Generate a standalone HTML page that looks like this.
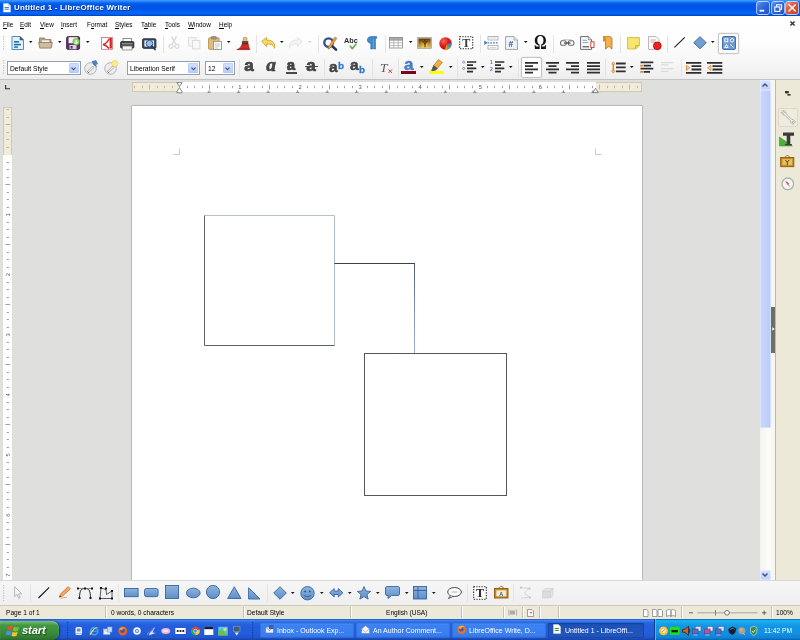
<!DOCTYPE html><html><head><meta charset="utf-8"><title>Untitled 1 - LibreOffice Writer</title><style>
*{margin:0;padding:0;box-sizing:border-box}
html,body{width:800px;height:640px;overflow:hidden;background:#dfdfdf;font-family:"Liberation Sans",sans-serif;}
.a{position:absolute}
svg{position:absolute;overflow:visible;will-change:transform}
.t{position:absolute;white-space:nowrap;line-height:1;will-change:transform}
#title{left:0;top:0;width:800px;height:15.5px;background:linear-gradient(to bottom,#4595fb 0%,#3590ff 6%,#1a7af8 12%,#0566f2 18%,#0259e6 26%,#0054e3 40%,#0055eb 56%,#005bf5 66%,#0266fb 78%,#0060ee 88%,#0053da 94%,#003fae 100%)}
#menus{left:0;top:15.5px;width:800px;height:64.5px;background:linear-gradient(to bottom,#ffffff 0%,#fdfdfd 40%,#f6f6f6 75%,#ededed 100%)}
#tbline{left:0;top:79px;width:800px;height:1px;background:#c4c4c4}
#doc{left:0;top:80px;width:800px;height:500px;background:#dfdfde;overflow:hidden}
#draw{left:0;top:580px;width:800px;height:25px;background:linear-gradient(to bottom,#f6f6f6,#efefef);border-top:1px solid #d8d8d8}
#status{left:0;top:604.5px;width:800px;height:14.5px;background:#ece9d8;border-top:1px solid #cfccbe}
#task{left:0;top:619px;width:800px;height:21px;background:linear-gradient(to bottom,#1f50c8 0%,#3f83f0 7%,#2a6be6 14%,#245edc 30%,#245ddb 70%,#2056cf 88%,#1941a5 100%)}
.mi{font-size:6.4px;color:#000;top:21.6px}
.mi u{text-decoration:none;border-bottom:0.6px solid #000}
.sep{position:absolute;width:1px;background:#e4e4e4}
.sb{font-size:6.6px;color:#000;top:610.3px}
.ssep{position:absolute;top:607px;height:11px;width:1px;background:#c5c2b2;border-right:1px solid #fff;box-sizing:content-box}
.tb{position:absolute;top:622.5px;height:15.5px;border-radius:2px;background:linear-gradient(to bottom,#5e9cf7 0%,#3c81f3 12%,#3a7ef0 80%,#3170de 100%);box-shadow:inset 0 0 0 0.5px #2b62c9}
.tb.act{background:linear-gradient(to bottom,#17429f 0%,#1e52b7 15%,#1f55bd 100%);box-shadow:inset 0 0 0 0.5px #123a90}
.tbt{font-size:7px;color:#fff;top:627.4px}
.combo{position:absolute;background:#fff;border:1px solid #939eae}
.cbtn{position:absolute;top:1px;right:1px;bottom:1px;width:10px;border-radius:1.5px;background:linear-gradient(to bottom,#d4e0fd,#b9cbf8);box-shadow:inset 0 0 0 0.5px #b0c4f3}
.ct{font-size:6.7px;color:#000}
</style></head><body>
<div class="a" id="title"></div>
<svg style="left:2.5px;top:3.2px" width="7.9" height="9.5" viewBox="0 0 10 12"><path d="M0.5 0.5h6l3 3v8h-9z" fill="#fff" stroke="#cfe0f8" stroke-width=".6"/><path d="M6.5 .5v3h3" fill="#dbe8f8" stroke="#9bb" stroke-width=".5"/><rect x="2" y="5" width="5.5" height="1.2" fill="#3b6fb5"/><rect x="2" y="7.2" width="5.5" height="1.2" fill="#3b6fb5"/></svg>
<div class="t " style="left:14px;top:4px;font-size:7.9px;font-weight:bold;color:#fff;text-shadow:0.5px 0.5px 0 #0a2a7a;letter-spacing:0.23px">Untitled 1 - LibreOffice Writer</div>
<div class="a" style="left:757.3px;top:1.900px;width:12.200px;height:11.800px;border-radius:2px;background:linear-gradient(135deg,#7aa6f5 0%,#3f78e6 25%,#2a5fd6 60%,#2454c8 100%);box-shadow:0 0 0 0.7px #e8efff"></div>
<div class="a" style="left:771.6px;top:1.900px;width:12.200px;height:11.800px;border-radius:2px;background:linear-gradient(135deg,#7aa6f5 0%,#3f78e6 25%,#2a5fd6 60%,#2454c8 100%);box-shadow:0 0 0 0.7px #e8efff"></div>
<div class="a" style="left:786px;top:1.900px;width:12.200px;height:11.800px;border-radius:2px;background:linear-gradient(135deg,#eeb09c 0%,#e0684c 28%,#d4502f 65%,#c4421e 100%);box-shadow:0 0 0 0.7px #e8efff"></div>
<svg style="left:757.3px;top:1.9px" width="12.5" height="12" viewBox="0 0 12.5 12"><rect x="2.6" y="7.800" width="4.600" height="1.800" fill="#fff"/></svg>
<svg style="left:771.6px;top:1.9px" width="12.5" height="12" viewBox="0 0 12.5 12"><rect x="4.6" y="2.8" width="5" height="4.4" fill="none" stroke="#fff" stroke-width="1.1"/><rect x="2.8" y="5" width="5" height="4.4" fill="#2f66da" stroke="#fff" stroke-width="1.1"/></svg>
<svg style="left:786px;top:1.9px" width="12.5" height="12" viewBox="0 0 12.5 12"><path d="M3 2.700l6.300 6.300M9.300 2.700l-6.300 6.300" stroke="#fff" stroke-width="1.400" stroke-linecap="round"/></svg>
<div class="a" id="menus"></div><div class="a" id="tbline"></div>
<div class="t mi" style="left:3.3px;"><u>F</u>ile</div>
<div class="t mi" style="left:20.3px;"><u>E</u>dit</div>
<div class="t mi" style="left:39.8px;"><u>V</u>iew</div>
<div class="t mi" style="left:61px;"><u>I</u>nsert</div>
<div class="t mi" style="left:87px;">F<u>o</u>rmat</div>
<div class="t mi" style="left:115.3px;"><u>S</u>tyles</div>
<div class="t mi" style="left:140.8px;">T<u>a</u>ble</div>
<div class="t mi" style="left:164.8px;"><u>T</u>ools</div>
<div class="t mi" style="left:188px;"><u>W</u>indow</div>
<div class="t mi" style="left:219px;"><u>H</u>elp</div>
<svg style="left:789.5px;top:21px" width="5" height="5" viewBox="0 0 5 5"><path d="M.4 .4l4.2 4.2M4.6 .4L.4 4.6" stroke="#2e2e2e" stroke-width="1.350"/></svg>
<svg style="left:2.5px;top:36px" width="2" height="15" viewBox="0 0 2 15"><rect x="0" y="0" width="1.2" height="1.2" fill="#c4c4c4"/><rect x="0" y="2.5" width="1.2" height="1.2" fill="#c4c4c4"/><rect x="0" y="5.0" width="1.2" height="1.2" fill="#c4c4c4"/><rect x="0" y="7.5" width="1.2" height="1.2" fill="#c4c4c4"/><rect x="0" y="10.0" width="1.2" height="1.2" fill="#c4c4c4"/><rect x="0" y="12.5" width="1.2" height="1.2" fill="#c4c4c4"/></svg>
<svg style="left:2.5px;top:60px" width="2" height="16" viewBox="0 0 2 16"><rect x="0" y="0" width="1.2" height="1.2" fill="#c4c4c4"/><rect x="0" y="2.5" width="1.2" height="1.2" fill="#c4c4c4"/><rect x="0" y="5.0" width="1.2" height="1.2" fill="#c4c4c4"/><rect x="0" y="7.5" width="1.2" height="1.2" fill="#c4c4c4"/><rect x="0" y="10.0" width="1.2" height="1.2" fill="#c4c4c4"/><rect x="0" y="12.5" width="1.2" height="1.2" fill="#c4c4c4"/></svg>
<svg style="left:10.5px;top:35.5px" width="13" height="14" viewBox="0 0 13 14"><path d="M1 .5h8l3.5 3.5v9.5h-11.5z" fill="#e4f1f8" stroke="#4f8fbf" stroke-width="1"/><path d="M9 .5v3.5h3.5z" fill="#3a4a5a" stroke="#4a6a8a" stroke-width=".6"/><rect x="3" y="5" width="5" height="1.6" fill="#1c6fb0"/><rect x="3" y="7.8" width="7" height="1.6" fill="#1c6fb0"/><rect x="3" y="10.4" width="4" height="1.4" fill="#1c6fb0"/></svg>
<svg style="left:28.7px;top:41.1px" width="3.6" height="2.1" viewBox="0 0 3.6 2.1"><path d="M0 0h3.600l-1.800 2.100z" fill="#111"/></svg>
<svg style="left:38px;top:37px" width="15" height="11.5" viewBox="0 0 15 11.5"><path d="M1.5 1h5l1 1.5h5.5v3h-11.5z" fill="#b9a384" stroke="#8a7558" stroke-width=".8"/><rect x="3.5" y="3" width="8" height="4" fill="#f3efe6" stroke="#a89b86" stroke-width=".5"/><path d="M.6 5.5h13.8l-1.2 5.6h-11.4z" fill="#cdbb9f" stroke="#8a7558" stroke-width=".8"/></svg>
<svg style="left:57.7px;top:41.1px" width="3.6" height="2.1" viewBox="0 0 3.6 2.1"><path d="M0 0h3.600l-1.800 2.100z" fill="#111"/></svg>
<svg style="left:65.8px;top:35.5px" width="14.4" height="14" viewBox="0 0 14.4 14"><rect x=".6" y=".6" width="13" height="12.8" rx="1.5" fill="#5c3566" stroke="#3d2246" stroke-width=".9"/><rect x="2.6" y="1.2" width="9" height="6" fill="#f4f4f4"/><rect x="3.5" y="9" width="7" height="4.2" fill="#d8d0dc"/><rect x="4.6" y="10" width="2" height="2.6" fill="#5c3566"/><circle cx="10.2" cy="5.800" r="3.300" fill="#9ad86a" stroke="#5aa62a" stroke-width=".7"/><path d="M10.2 3.900v3.800M8.500 6.200l1.700 1.700 1.700-1.700" stroke="#fff" stroke-width="1" fill="none"/></svg>
<svg style="left:85.7px;top:41.1px" width="3.6" height="2.1" viewBox="0 0 3.6 2.1"><path d="M0 0h3.600l-1.800 2.100z" fill="#111"/></svg>
<svg style="left:100.5px;top:36.8px" width="12" height="12.8" viewBox="0 0 12 12.8"><rect x=".5" y=".5" width="11" height="11.800" fill="#fff" stroke="#d06a6a" stroke-width=".8"/><path d="M9.200 1v10.500M10.300 1v10.500" stroke="#d21f1f" stroke-width="1.100"/><path d="M8.500 1.500c-1.500 3-4 5.500-6.500 6 2 .5 4.500 2 6 4" fill="none" stroke="#d21f1f" stroke-width="1.400"/></svg>
<svg style="left:120.3px;top:37.5px" width="14.2" height="12" viewBox="0 0 14.2 12"><rect x="3" y=".5" width="8.500" height="4" fill="#fff" stroke="#777" stroke-width=".8"/><rect x=".6" y="3.6" width="13.300" height="6.500" rx="1" fill="#4a4a4a" stroke="#222" stroke-width=".8"/><rect x="2.500" y="8" width="9.500" height="4" fill="#f4f4f4" stroke="#777" stroke-width=".7"/><rect x="2" y="5" width="10.500" height="1.3" fill="#8a8a8a"/></svg>
<svg style="left:141.5px;top:37.5px" width="13.8" height="12" viewBox="0 0 13.8 12"><rect x=".6" y=".8" width="13.300" height="9.500" rx="1" fill="#3f4a57" stroke="#1f2630" stroke-width=".9"/><rect x="2.400" y="2.400" width="9.700" height="6.200" fill="#e9eef4"/><circle cx="7.5" cy="5.6" r="3.3" fill="#9fc0e6" stroke="#2d5f9a" stroke-width="1"/><path d="M9.8 8l3.200 3.500" stroke="#2d3e55" stroke-width="1.800" stroke-linecap="round"/></svg>
<div class="sep" style="left:163px;top:35px;height:18px"></div>
<svg style="left:168px;top:36px" width="12" height="13" viewBox="0 0 12 13"><path d="M3.500 .5l4.500 8M8.500 .5l-4.500 8" stroke="#d6d6d6" stroke-width="1.300"/><circle cx="3" cy="10.300" r="2" fill="none" stroke="#d9d9d9" stroke-width="1.200"/><circle cx="9" cy="10.300" r="2" fill="none" stroke="#d9d9d9" stroke-width="1.200"/></svg>
<svg style="left:188px;top:36.5px" width="12.5" height="12.5" viewBox="0 0 12.5 12.5"><rect x=".6" y=".6" width="7.500" height="8.500" fill="#f6f6f6" stroke="#dcdcdc" stroke-width=".9"/><rect x="4.400" y="3.400" width="7.500" height="8.500" fill="#f8f8f8" stroke="#d6d6d6" stroke-width=".9"/></svg>
<svg style="left:208px;top:35.5px" width="14" height="14" viewBox="0 0 14 14"><rect x=".6" y="1.800" width="10.500" height="11.500" rx="1" fill="#e0bd78" stroke="#a8843a" stroke-width=".8"/><rect x="3.300" y=".5" width="5" height="2.600" rx=".8" fill="#9a9a9a" stroke="#666" stroke-width=".6"/><rect x="5.500" y="5.500" width="8" height="8" fill="#fff" stroke="#8a8a8a" stroke-width=".8"/><path d="M7 8h5M7 10h5M7 12h3" stroke="#aaa" stroke-width=".7"/></svg>
<svg style="left:226.7px;top:41.1px" width="3.6" height="2.1" viewBox="0 0 3.6 2.1"><path d="M0 0h3.600l-1.800 2.100z" fill="#111"/></svg>
<svg style="left:236px;top:36.5px" width="14.5" height="13.5" viewBox="0 0 14.5 13.5"><rect x="7.300" y=".4" width="3.600" height="4.600" rx=".8" fill="#e8c07a" stroke="#a8782c" stroke-width=".6"/><rect x="6.200" y="4.600" width="5.800" height="2.400" fill="#5a4a3a" stroke="#3a2a1a" stroke-width=".5"/><path d="M6 7h6.200c.3 2 .8 3.800 1.600 5.600h-13c3-1 4.800-3 5.200-5.600z" fill="#d42a2a" stroke="#8f1313" stroke-width=".6"/><path d="M2.500 12.500c2.500-.5 6-.8 10.500-.3" stroke="#8f1313" stroke-width=".6" fill="none"/></svg>
<div class="sep" style="left:255.5px;top:35px;height:18px"></div>
<svg style="left:261px;top:37px" width="14.5" height="11.5" viewBox="0 0 14.5 11.5"><path d="M.7 4.300L5.600 .6v2.500c4.800-.3 8.200 2.300 8.200 6.200 0 .8-.2 1.500-.4 2-0.400-2.800-2.800-4.600-7.800-4.300v2.600z" fill="#f6d968" stroke="#c9a52a" stroke-width=".9" stroke-linejoin="round"/></svg>
<svg style="left:280.2px;top:41.1px" width="3.6" height="2.1" viewBox="0 0 3.6 2.1"><path d="M0 0h3.600l-1.800 2.100z" fill="#111"/></svg>
<svg style="left:289px;top:37px" width="14" height="11.5" viewBox="0 0 14 11.5"><path d="M13.300 4.300L8.400 .6v2.500C3.600 2.800 .2 5.400 .2 9.300c0 .8.200 1.500.4 2 .4-2.800 2.800-4.600 7.800-4.300v2.600z" fill="#f3f3f3" stroke="#e3e3e3" stroke-width=".9" stroke-linejoin="round"/></svg>
<svg style="left:308.2px;top:41.1px" width="3.6" height="2.1" viewBox="0 0 3.6 2.1"><path d="M0 0h3.600l-1.800 2.100z" fill="#cfcfcf"/></svg>
<div class="sep" style="left:317.5px;top:35px;height:18px"></div>
<svg style="left:323px;top:36.5px" width="15" height="13.5" viewBox="0 0 15 13.5"><circle cx="5.600" cy="5.600" r="4.300" fill="#fff" fill-opacity=".5" stroke="#2f4f8f" stroke-width="2.300"/><path d="M8.800 8.800l4.200 3.800" stroke="#22345f" stroke-width="2.600" stroke-linecap="round"/><path d="M13.800 1.200l-6.500 9.800-2.300 1.200.5-2.500 6.300-9.500z" fill="#f0a040" stroke="#a8621c" stroke-width=".6"/></svg>
<svg style="left:343.7px;top:36.5px" width="15" height="13" viewBox="0 0 15 13"><text x="0" y="5.900" font-family="Liberation Sans,sans-serif" font-weight="bold" font-size="7.200" fill="#2a2a3a" textLength="13.800" lengthAdjust="spacingAndGlyphs">Abc</text><path d="M6.300 9.200l2 2.400 3.600-4.400" fill="none" stroke="#6ab04a" stroke-width="1.700" stroke-linecap="round" stroke-linejoin="round"/></svg>
<svg style="left:366.5px;top:36px" width="10" height="13.5" viewBox="0 0 10 13.5"><path d="M4.600 .6h5v1.800h-1.200v10.600h-1.700v-10.600h-1.200v10.600h-1.700v-5.800c-2 0-3.400-1.400-3.400-3.300s1.600-3.300 4.200-3.300z" fill="#3f8fd6" stroke="#1f5f9f" stroke-width=".6"/></svg>
<div class="sep" style="left:384.5px;top:35px;height:18px"></div>
<svg style="left:389px;top:37px" width="14" height="11.5" viewBox="0 0 14 11.5"><rect x=".5" y=".5" width="13" height="10.500" fill="#fff" stroke="#8a8a8a" stroke-width=".8"/><rect x=".5" y=".5" width="13" height="2.600" fill="#b0b0b0" stroke="#8a8a8a" stroke-width=".8"/><path d="M.5 5.800h13M.5 8.400h13M4.800 .5v10.500M9.200 .5v10.500" stroke="#a0a0a0" stroke-width=".7"/></svg>
<svg style="left:408.7px;top:41.1px" width="3.6" height="2.1" viewBox="0 0 3.6 2.1"><path d="M0 0h3.600l-1.800 2.100z" fill="#111"/></svg>
<svg style="left:417.3px;top:37px" width="15" height="11.8" viewBox="0 0 15 11.8"><defs><radialGradient id="ig" cx=".55" cy="1" r=".9"><stop offset="0" stop-color="#ffe070"/><stop offset=".45" stop-color="#d8a030"/><stop offset="1" stop-color="#6a4414"/></radialGradient></defs><rect x=".4" y=".4" width="14.200" height="11" fill="#cfc6b0" stroke="#a89f88" stroke-width=".7"/><rect x="1.500" y="1.500" width="12" height="8.800" fill="url(#ig)"/><path d="M8 10.300v-4M8 6.800l-2.300-2.800M8 6.800l2.300-2.800M8 5v-2.500" stroke="#2a1a06" stroke-width=".9"/></svg>
<svg style="left:439.3px;top:37px" width="13.2" height="13" viewBox="0 0 13.2 13"><defs><radialGradient id="cg" cx=".35" cy=".3" r=".8"><stop offset="0" stop-color="#f46a5a"/><stop offset=".5" stop-color="#e01b1b"/><stop offset="1" stop-color="#b01010"/></radialGradient></defs><circle cx="6.500" cy="6.500" r="6.200" fill="url(#cg)"/><path d="M7.500 7.500l5-1.800a6.200 6.200 0 0 1-1 4.800z" fill="#4a82d0"/><path d="M7.500 7.500l4 3a6.200 6.200 0 0 1-3 2z" fill="#6ab04a"/><path d="M7.500 7.500l1 5a6.200 6.200 0 0 1-2.500.1z" fill="#e8a030"/></svg>
<svg style="left:459px;top:36px" width="14.5" height="13.5" viewBox="0 0 14.5 13.5"><rect x=".7" y=".7" width="13" height="12" fill="#fff" stroke="#222" stroke-width="1.100" stroke-dasharray="1.300 1.300"/><text x="7.250" y="11" text-anchor="middle" font-family="Liberation Serif,serif" font-weight="bold" font-size="12" fill="#3a3a3a">T</text></svg>
<div class="sep" style="left:479.5px;top:35px;height:18px"></div>
<svg style="left:484px;top:36px" width="15" height="13.5" viewBox="0 0 15 13.5"><rect x="4" y=".4" width="10" height="3.600" fill="#fff" stroke="#9a9a9a" stroke-width=".7"/><rect x="4" y="9.500" width="10" height="3.600" fill="#fff" stroke="#9a9a9a" stroke-width=".7"/><path d="M3.500 6.800h11" stroke="#4a7fc0" stroke-width="1.300" stroke-dasharray="1.800 1"/><path d="M.3 4.600l3.200 2.200-3.200 2.200z" fill="#3f78c0"/><path d="M5.500 2h7M5.500 11.500h7" stroke="#c2c2c2" stroke-width=".7"/></svg>
<svg style="left:505px;top:35.5px" width="13" height="14" viewBox="0 0 13 14"><path d="M.6 .6h8.400l3.400 3.400v9.400h-11.800z" fill="#eef4fa" stroke="#9a9a9a" stroke-width=".9"/><path d="M9 .6v3.400h3.400" fill="#e4e4e4" stroke="#9a9a9a" stroke-width=".7"/><text x="5.800" y="11.200" text-anchor="middle" font-family="Liberation Sans,sans-serif" font-weight="bold" font-size="8.500" fill="#2a5090">#</text></svg>
<svg style="left:524.2px;top:41.1px" width="3.6" height="2.1" viewBox="0 0 3.6 2.1"><path d="M0 0h3.600l-1.800 2.100z" fill="#111"/></svg>
<svg style="left:533px;top:36px" width="15" height="14" viewBox="0 0 15 14"><text x="7.250" y="13.300" text-anchor="middle" font-family="Liberation Serif,serif" font-weight="bold" font-size="18.500" fill="#161616" transform="translate(7.250 0) scale(.86 1.180) translate(-7.250 -2)">Ω</text></svg>
<div class="sep" style="left:553px;top:35px;height:18px"></div>
<svg style="left:559.5px;top:38.5px" width="14.5" height="8" viewBox="0 0 14.5 8"><rect x=".6" y="1.800" width="5.600" height="4.400" rx="1.500" fill="none" stroke="#6a6a6a" stroke-width="1.100"/><rect x="8.300" y="1.800" width="5.600" height="4.400" rx="1.500" fill="none" stroke="#6a6a6a" stroke-width="1.100"/><path d="M4 4h6.500" stroke="#4a4a4a" stroke-width="1.300"/><path d="M3 .8h8.500" stroke="#999" stroke-width=".6"/></svg>
<svg style="left:580px;top:35.8px" width="14.5" height="14" viewBox="0 0 14.5 14"><path d="M.6 .6h7.800l3.200 3.200v9.600h-11z" fill="#fafcfe" stroke="#5a5a5a" stroke-width=".9"/><path d="M8.400 .6v3.200h3.200" fill="#e0e6ec" stroke="#5a5a5a" stroke-width=".6"/><path d="M2.500 4.300h4.500M2.500 6.600h6" stroke="#7a9ab8" stroke-width=".9"/><path d="M2.500 10.800h6.500" stroke="#333" stroke-width="1"/><rect x="10.800" y="5.800" width="3.200" height="5.600" fill="#fff" stroke="#c03a2a" stroke-width=".9"/></svg>
<svg style="left:602px;top:36px" width="11" height="13.5" viewBox="0 0 11 13.5"><path d="M1 .6h6.500c1.500 0 2.500 1 2.500 2.500v10l-3.300-2.800-3.200 2.800v-10.500c0-1-1-2-2.500-2z" fill="#f3b04a" stroke="#b5761a" stroke-width=".8"/><path d="M1 .6c1.500 0 2.500 1 2.500 2v3h-2.500z" fill="#d88f2a"/></svg>
<div class="sep" style="left:619.5px;top:35px;height:18px"></div>
<svg style="left:627px;top:36.5px" width="13" height="12.5" viewBox="0 0 13 12.5"><path d="M.6 .6h11.800v8l-3.800 3.400h-8z" fill="#f6e670" stroke="#cdb42a" stroke-width=".8"/><path d="M12.400 8.600h-3.800v3.400" fill="#e6d450" stroke="#c4a000" stroke-width=".6"/></svg>
<svg style="left:647.5px;top:35.5px" width="14" height="14" viewBox="0 0 14 14"><path d="M.6 .6h7.400l3 3v9.800h-10.400z" fill="#fff" stroke="#aaa" stroke-width=".9"/><path d="M2.400 4h5.500M2.400 6h5.500" stroke="#c88" stroke-width=".8"/><circle cx="9.300" cy="9.800" r="3.900" fill="#e22" stroke="#a00" stroke-width=".7"/></svg>
<div class="sep" style="left:667px;top:35px;height:18px"></div>
<svg style="left:674px;top:37px" width="11" height="10.8" viewBox="0 0 11 10.8"><path d="M.4 10.400L10.800 .4" stroke="#222" stroke-width="1.100"/></svg>
<svg style="left:692.5px;top:36px" width="14" height="13.5" viewBox="0 0 14 13.5"><path d="M7 .7l6.300 6-6.300 6-6.300-6z" fill="#729fcf" stroke="#3465a4" stroke-width=".9"/></svg>
<svg style="left:711.2px;top:41.1px" width="3.6" height="2.1" viewBox="0 0 3.6 2.1"><path d="M0 0h3.600l-1.800 2.100z" fill="#111"/></svg>
<div class="a" style="left:718px;top:32.500px;width:21px;height:21.500px;border:1px solid #c9c9c9;border-radius:2px;background:#fdfdfd;box-shadow:0 0 0 .5px #e6e6e6"></div>
<svg style="left:721.5px;top:36px" width="14" height="14" viewBox="0 0 14 14"><rect x=".5" y=".5" width="13" height="13" rx="1.500" fill="#6f9bd1" stroke="#3465a4" stroke-width=".9"/><rect x="2.800" y="2.800" width="3" height="3" fill="none" stroke="#fff" stroke-width=".9"/><circle cx="10" cy="4.300" r="1.700" fill="none" stroke="#fff" stroke-width=".9"/><path d="M2.600 11.400l1.800-3 1.800 3z" fill="none" stroke="#fff" stroke-width=".9"/><path d="M8.300 8.500l3.300 3" stroke="#fff" stroke-width=".9"/></svg>
<div class="combo" style="left:7px;top:61px;width:73.5px;height:13.5px"><div class="t ct" style="left:2.000px;top:3.500px">Default Style</div><div class="cbtn"><svg style="left:2.500px;top:3.700px" width="5" height="3.500" viewBox="0 0 5 3.500"><path d="M.5 .6l2 2 2-2" fill="none" stroke="#3a559c" stroke-width="1.200"/></svg></div></div>
<div class="combo" style="left:127px;top:61px;width:73px;height:13.5px"><div class="t ct" style="left:2.000px;top:3.500px">Liberation Serif</div><div class="cbtn"><svg style="left:2.500px;top:3.700px" width="5" height="3.500" viewBox="0 0 5 3.500"><path d="M.5 .6l2 2 2-2" fill="none" stroke="#3a559c" stroke-width="1.200"/></svg></div></div>
<div class="combo" style="left:204.5px;top:61px;width:30px;height:13.5px"><div class="t ct" style="left:2.000px;top:3.500px">12</div><div class="cbtn"><svg style="left:2.500px;top:3.700px" width="5" height="3.500" viewBox="0 0 5 3.500"><path d="M.5 .6l2 2 2-2" fill="none" stroke="#3a559c" stroke-width="1.200"/></svg></div></div>
<svg style="left:84px;top:59.5px" width="14" height="15" viewBox="0 0 14 15"><circle cx="6.500" cy="8.500" r="5.800" fill="#ececec" stroke="#a4a4a4" stroke-width=".8"/><path d="M3.500 11.500l5-5.500 1.500 1.500-5.500 5z" fill="#fff" stroke="#8a8a8a" stroke-width=".6"/><path d="M3.500 11.500l1.500 1.500" stroke="#555" stroke-width=".8"/><path d="M8 1.500l4-1 1.500 3.500-2 .5 1 2-2.500-1.500z" fill="#4a86cf" stroke="#2a5a9f" stroke-width=".5"/></svg>
<svg style="left:104px;top:59.5px" width="14" height="15" viewBox="0 0 14 15"><circle cx="6.500" cy="8.500" r="5.800" fill="#ececec" stroke="#a4a4a4" stroke-width=".8"/><path d="M3.500 11.500l5-5.500 1.500 1.500-5.500 5z" fill="#fff" stroke="#8a8a8a" stroke-width=".6"/><path d="M3.500 11.500l1.500 1.500" stroke="#555" stroke-width=".8"/><circle cx="10.800" cy="3.600" r="3" fill="#f8ee90" stroke="#d8c84a" stroke-width=".5"/></svg>
<div class="sep" style="left:238.5px;top:59px;height:18px"></div>
<div class="t" style="left:243.4px;top:56.800px;width:12px;text-align:center;font-size:17px;font-weight:bold;color:#474747;-webkit-text-stroke:.7px #3a3a3a;">a</div>
<div class="t" style="left:264.6px;top:56.800px;width:12px;text-align:center;font-size:17px;font-weight:bold;color:#474747;-webkit-text-stroke:.7px #3a3a3a;font-style:italic;font-family:'Liberation Serif',serif;font-size:19.500px;top:54.700px;-webkit-text-stroke:.5px #3a3a3a">a</div>
<div class="t" style="left:285px;top:56.800px;width:12px;text-align:center;font-size:17px;font-weight:bold;color:#474747;-webkit-text-stroke:.7px #3a3a3a;font-size:15px;top:57.300px">a</div>
<div class="a" style="left:285.500px;top:72.400px;width:11px;height:1.300px;background:#4a4a4a"></div>
<div class="t" style="left:305px;top:56.800px;width:12px;text-align:center;font-size:17px;font-weight:bold;color:#474747;-webkit-text-stroke:.7px #3a3a3a;">a</div>
<div class="a" style="left:304.500px;top:66px;width:13.500px;height:1.300px;background:#4a4a4a"></div>
<div class="sep" style="left:324px;top:59px;height:18px"></div>
<div class="t" style="left:329.300px;top:58.800px;font-size:15.500px;font-weight:bold;color:#474747;-webkit-text-stroke:.5px #3a3a3a">a</div><div class="t" style="left:338.300px;top:60.600px;font-size:9.800px;font-weight:bold;color:#2f7acb;-webkit-text-stroke:.3px #2f7acb">b</div>
<div class="t" style="left:350.300px;top:57.400px;font-size:15.500px;font-weight:bold;color:#474747;-webkit-text-stroke:.5px #3a3a3a">a</div><div class="t" style="left:359.300px;top:65.300px;font-size:9.800px;font-weight:bold;color:#2f7acb;-webkit-text-stroke:.3px #2f7acb">b</div>
<div class="sep" style="left:371.5px;top:59px;height:18px"></div>
<div class="t" style="left:379.500px;top:60.500px;font-family:'Liberation Serif',serif;font-style:italic;font-size:13.500px;color:#5e5e5e">T</div>
<svg style="left:387.5px;top:69.3px" width="4.4" height="4.4" viewBox="0 0 4.4 4.4"><path d="M.4 .4l3.600 3.600M4 .4l-3.600 3.600" stroke="#d84040" stroke-width="1"/></svg>
<div class="sep" style="left:398px;top:59px;height:18px"></div>
<div class="t" style="left:404px;top:55.500px;font-size:17px;font-weight:bold;color:#4682c8;-webkit-text-stroke:.4px #3a6fb0">a</div>
<div class="a" style="left:401.300px;top:70.700px;width:14.700px;height:3.500px;background:#7e0021"></div>
<svg style="left:420.2px;top:66.1px" width="3.6" height="2.1" viewBox="0 0 3.6 2.1"><path d="M0 0h3.600l-1.800 2.100z" fill="#111"/></svg>
<svg style="left:430px;top:59px" width="13" height="12" viewBox="0 0 13 12"><path d="M8.500 .6l3.800 2.800-5 6.200-3.800-2.800z" fill="#f0b040" stroke="#a8701c" stroke-width=".7"/><path d="M3.500 6.800l3.800 2.800-2.300 1.800-3.500.3z" fill="#555" stroke="#333" stroke-width=".5"/></svg>
<div class="a" style="left:428.700px;top:70.700px;width:15.500px;height:3.700px;background:#ffff00"></div>
<svg style="left:448.7px;top:66.1px" width="3.6" height="2.1" viewBox="0 0 3.6 2.1"><path d="M0 0h3.600l-1.800 2.100z" fill="#111"/></svg>
<div class="sep" style="left:457px;top:59px;height:18px"></div>
<svg style="left:462px;top:61.4px" width="14.5" height="12" viewBox="0 0 14.5 12"><circle cx="1.700" cy="1.200" r="1.100" fill="none" stroke="#5f88c0" stroke-width=".8"/><circle cx="1.700" cy="7.400" r="1.100" fill="none" stroke="#5f88c0" stroke-width=".8"/><path d="M5 1h9.300M5 4.200h6M5 7.400h9.300M5 10.600h6" stroke="#2e2e2e" stroke-width="1.700"/></svg>
<svg style="left:480.7px;top:66.1px" width="3.6" height="2.1" viewBox="0 0 3.6 2.1"><path d="M0 0h3.600l-1.800 2.100z" fill="#111"/></svg>
<svg style="left:490px;top:61.4px" width="14.5" height="12" viewBox="0 0 14.5 12"><text x="0" y="3.400" font-size="4.800" font-weight="bold" fill="#3f78c0" font-family="Liberation Sans,sans-serif">1</text><text x="0" y="10.400" font-size="4.800" font-weight="bold" fill="#3f78c0" font-family="Liberation Sans,sans-serif">2</text><path d="M5 1h9.300M5 4.200h6M5 7.400h9.300M5 10.600h6" stroke="#2e2e2e" stroke-width="1.700"/></svg>
<svg style="left:509.2px;top:66.1px" width="3.6" height="2.1" viewBox="0 0 3.6 2.1"><path d="M0 0h3.600l-1.800 2.100z" fill="#111"/></svg>
<div class="sep" style="left:518px;top:59px;height:18px"></div>
<div class="a" style="left:521px;top:57px;width:21px;height:21px;border:1px solid #c4c4c4;border-radius:2px;background:#fff;box-shadow:0 0 0 .5px #e6e6e6"></div>
<svg style="left:525px;top:61.6px" width="13" height="12" viewBox="0 0 13 12"><rect x="0" y="0.0" width="13" height="1.750" fill="#2e2e2e"/><rect x="0" y="3.25" width="8" height="1.750" fill="#2e2e2e"/><rect x="0" y="6.5" width="13" height="1.750" fill="#2e2e2e"/><rect x="0" y="9.75" width="8" height="1.750" fill="#2e2e2e"/></svg>
<svg style="left:545.5px;top:61.6px" width="13" height="12" viewBox="0 0 13 12"><rect x="0.0" y="0.0" width="13" height="1.750" fill="#2e2e2e"/><rect x="2.5" y="3.25" width="8" height="1.750" fill="#2e2e2e"/><rect x="0.0" y="6.5" width="13" height="1.750" fill="#2e2e2e"/><rect x="2.5" y="9.75" width="8" height="1.750" fill="#2e2e2e"/></svg>
<svg style="left:566px;top:61.6px" width="13" height="12" viewBox="0 0 13 12"><rect x="0" y="0.0" width="13" height="1.750" fill="#2e2e2e"/><rect x="5" y="3.25" width="8" height="1.750" fill="#2e2e2e"/><rect x="0" y="6.5" width="13" height="1.750" fill="#2e2e2e"/><rect x="5" y="9.75" width="8" height="1.750" fill="#2e2e2e"/></svg>
<svg style="left:587px;top:61.6px" width="13" height="12" viewBox="0 0 13 12"><rect x="0" y="0.0" width="13" height="1.750" fill="#2e2e2e"/><rect x="0" y="3.25" width="13" height="1.750" fill="#2e2e2e"/><rect x="0" y="6.5" width="13" height="1.750" fill="#2e2e2e"/><rect x="0" y="9.75" width="13" height="1.750" fill="#2e2e2e"/></svg>
<div class="sep" style="left:604.5px;top:59px;height:18px"></div>
<svg style="left:610.5px;top:60.5px" width="15" height="13" viewBox="0 0 15 13"><path d="M2.300 1.200v10.600" stroke="#e0862c" stroke-width="1.500"/><path d="M.5 3.200l1.800-2.400 1.800 2.400zM.5 9.800l1.800 2.400 1.800-2.400z" fill="#f6d8b0" stroke="#e0862c" stroke-width=".7"/><path d="M5 2.500h9.700M5 6.400h9.700M5 10.300h9.700" stroke="#2e2e2e" stroke-width="1.800"/></svg>
<svg style="left:630.2px;top:66.1px" width="3.6" height="2.1" viewBox="0 0 3.6 2.1"><path d="M0 0h3.600l-1.800 2.100z" fill="#111"/></svg>
<svg style="left:640.3px;top:61px" width="14" height="12" viewBox="0 0 14 12"><path d="M.5 1.400h12.800M3.700 4.600h7.300M.5 7.700h12.800M3.700 10.900h6.300" stroke="#2e2e2e" stroke-width="1.800"/><path d="M.2 4.600h3M.2 10.900h3" stroke="#e0862c" stroke-width="1.600"/></svg>
<svg style="left:661px;top:61px" width="14" height="12" viewBox="0 0 14 12"><path d="M0 1.600h12.500M0 3.800h7.500M0 7.600h12.500M0 10.300h7.500" stroke="#dadada" stroke-width="1.300"/></svg>
<div class="sep" style="left:680.5px;top:59px;height:18px"></div>
<svg style="left:685.8px;top:61.5px" width="15.5" height="12" viewBox="0 0 15.5 12"><path d="M0 .9h15.300M5.500 4.200h9.800M5.500 7.500h9.800M0 10.800h15.300" stroke="#2e2e2e" stroke-width="1.800"/><path d="M.5 3.400l3.300 2.450-3.300 2.450z" fill="#fbe6cc" stroke="#e0862c" stroke-width=".9"/></svg>
<svg style="left:706.8px;top:61.5px" width="15.5" height="12" viewBox="0 0 15.5 12"><path d="M0 .9h15.300M5.500 4.200h9.800M5.500 7.500h9.800M0 10.800h15.300" stroke="#2e2e2e" stroke-width="1.800"/><path d="M3.800 3.400l-3.300 2.450 3.300 2.450z" fill="#fbe6cc" stroke="#e0862c" stroke-width=".9"/></svg>
<div class="a" id="doc">
<svg style="left:5px;top:4.500px" width="5" height="4.500" viewBox="0 0 5 4.500"><path d="M.6 0v3.800h4.400" fill="none" stroke="#333" stroke-width="1.100"/></svg>
<div class="a" style="left:132px;top:1.500px;width:510px;height:10px;background:#fff"></div>
<div class="a" style="left:132px;top:1.500px;width:47.500px;height:10px;background:#f1ecda;border:1px solid #cfcab6;border-right:none"></div>
<div class="a" style="left:595.500px;top:1.500px;width:46.500px;height:10px;background:#f1ecda;border:1px solid #cfcab6;border-left:none"></div>
<svg style="left:132px;top:1.500px" width="511" height="12" viewBox="0 0 511 12"><rect x="2.10" y="3.80" width=".8" height="2.4" fill="#b3a888"/><rect x="10.10" y="3.80" width=".8" height="2.4" fill="#b3a888"/><rect x="17.10" y="2.60" width=".8" height="4.8" fill="#b3a888"/><rect x="25.10" y="3.80" width=".8" height="2.4" fill="#b3a888"/><rect x="32.10" y="3.80" width=".8" height="2.4" fill="#b3a888"/><rect x="40.10" y="3.80" width=".8" height="2.4" fill="#b3a888"/><rect x="55.10" y="3.80" width=".8" height="2.4" fill="#8c8c8c"/><rect x="62.10" y="3.80" width=".8" height="2.4" fill="#8c8c8c"/><rect x="70.10" y="3.80" width=".8" height="2.4" fill="#8c8c8c"/><rect x="77.10" y="2.60" width=".8" height="4.8" fill="#8c8c8c"/><rect x="85.10" y="3.80" width=".8" height="2.4" fill="#8c8c8c"/><rect x="92.10" y="3.80" width=".8" height="2.4" fill="#8c8c8c"/><rect x="100.10" y="3.80" width=".8" height="2.4" fill="#8c8c8c"/><rect x="115.10" y="3.80" width=".8" height="2.4" fill="#8c8c8c"/><rect x="122.10" y="3.80" width=".8" height="2.4" fill="#8c8c8c"/><rect x="130.10" y="3.80" width=".8" height="2.4" fill="#8c8c8c"/><rect x="137.10" y="2.60" width=".8" height="4.8" fill="#8c8c8c"/><rect x="145.10" y="3.80" width=".8" height="2.4" fill="#8c8c8c"/><rect x="152.10" y="3.80" width=".8" height="2.4" fill="#8c8c8c"/><rect x="160.10" y="3.80" width=".8" height="2.4" fill="#8c8c8c"/><rect x="175.10" y="3.80" width=".8" height="2.4" fill="#8c8c8c"/><rect x="182.10" y="3.80" width=".8" height="2.4" fill="#8c8c8c"/><rect x="190.10" y="3.80" width=".8" height="2.4" fill="#8c8c8c"/><rect x="197.10" y="2.60" width=".8" height="4.8" fill="#8c8c8c"/><rect x="205.10" y="3.80" width=".8" height="2.4" fill="#8c8c8c"/><rect x="212.10" y="3.80" width=".8" height="2.4" fill="#8c8c8c"/><rect x="220.10" y="3.80" width=".8" height="2.4" fill="#8c8c8c"/><rect x="235.10" y="3.80" width=".8" height="2.4" fill="#8c8c8c"/><rect x="242.10" y="3.80" width=".8" height="2.4" fill="#8c8c8c"/><rect x="250.10" y="3.80" width=".8" height="2.4" fill="#8c8c8c"/><rect x="257.10" y="2.60" width=".8" height="4.8" fill="#8c8c8c"/><rect x="265.10" y="3.80" width=".8" height="2.4" fill="#8c8c8c"/><rect x="272.10" y="3.80" width=".8" height="2.4" fill="#8c8c8c"/><rect x="280.10" y="3.80" width=".8" height="2.4" fill="#8c8c8c"/><rect x="295.10" y="3.80" width=".8" height="2.4" fill="#8c8c8c"/><rect x="302.10" y="3.80" width=".8" height="2.4" fill="#8c8c8c"/><rect x="310.10" y="3.80" width=".8" height="2.4" fill="#8c8c8c"/><rect x="317.10" y="2.60" width=".8" height="4.8" fill="#8c8c8c"/><rect x="325.10" y="3.80" width=".8" height="2.4" fill="#8c8c8c"/><rect x="332.10" y="3.80" width=".8" height="2.4" fill="#8c8c8c"/><rect x="340.10" y="3.80" width=".8" height="2.4" fill="#8c8c8c"/><rect x="355.10" y="3.80" width=".8" height="2.4" fill="#8c8c8c"/><rect x="362.10" y="3.80" width=".8" height="2.4" fill="#8c8c8c"/><rect x="370.10" y="3.80" width=".8" height="2.4" fill="#8c8c8c"/><rect x="377.10" y="2.60" width=".8" height="4.8" fill="#8c8c8c"/><rect x="385.10" y="3.80" width=".8" height="2.4" fill="#8c8c8c"/><rect x="392.10" y="3.80" width=".8" height="2.4" fill="#8c8c8c"/><rect x="400.10" y="3.80" width=".8" height="2.4" fill="#8c8c8c"/><rect x="415.10" y="3.80" width=".8" height="2.4" fill="#8c8c8c"/><rect x="422.10" y="3.80" width=".8" height="2.4" fill="#8c8c8c"/><rect x="430.10" y="3.80" width=".8" height="2.4" fill="#8c8c8c"/><rect x="437.10" y="2.60" width=".8" height="4.8" fill="#8c8c8c"/><rect x="445.10" y="3.80" width=".8" height="2.4" fill="#8c8c8c"/><rect x="452.10" y="3.80" width=".8" height="2.4" fill="#8c8c8c"/><rect x="460.10" y="3.80" width=".8" height="2.4" fill="#8c8c8c"/><rect x="467.10" y="2.60" width=".8" height="4.8" fill="#b3a888"/><rect x="475.10" y="3.80" width=".8" height="2.4" fill="#b3a888"/><rect x="482.10" y="3.80" width=".8" height="2.4" fill="#b3a888"/><rect x="490.10" y="3.80" width=".8" height="2.4" fill="#b3a888"/><rect x="497.10" y="2.60" width=".8" height="4.8" fill="#b3a888"/><rect x="505.10" y="3.80" width=".8" height="2.4" fill="#b3a888"/><text x="107.9" y="7.200" text-anchor="middle" font-size="5.800" fill="#555" font-family="Liberation Sans,sans-serif">1</text><text x="168.0" y="7.200" text-anchor="middle" font-size="5.800" fill="#555" font-family="Liberation Sans,sans-serif">2</text><text x="228.1" y="7.200" text-anchor="middle" font-size="5.800" fill="#555" font-family="Liberation Sans,sans-serif">3</text><text x="288.2" y="7.200" text-anchor="middle" font-size="5.800" fill="#555" font-family="Liberation Sans,sans-serif">4</text><text x="348.3" y="7.200" text-anchor="middle" font-size="5.800" fill="#555" font-family="Liberation Sans,sans-serif">5</text><text x="408.4" y="7.200" text-anchor="middle" font-size="5.800" fill="#555" font-family="Liberation Sans,sans-serif">6</text><path d="M75.4 10.300h3.200M77.0 8.300v2" stroke="#6e6e6e" stroke-width=".8"/><path d="M105.0 10.300h3.200M106.6 8.300v2" stroke="#6e6e6e" stroke-width=".8"/><path d="M134.5 10.300h3.200M136.1 8.300v2" stroke="#6e6e6e" stroke-width=".8"/><path d="M164.0 10.300h3.200M165.6 8.300v2" stroke="#6e6e6e" stroke-width=".8"/><path d="M193.6 10.300h3.200M195.2 8.300v2" stroke="#6e6e6e" stroke-width=".8"/><path d="M223.1 10.300h3.200M224.7 8.300v2" stroke="#6e6e6e" stroke-width=".8"/><path d="M252.6 10.300h3.200M254.2 8.300v2" stroke="#6e6e6e" stroke-width=".8"/><path d="M282.1 10.300h3.200M283.7 8.300v2" stroke="#6e6e6e" stroke-width=".8"/><path d="M311.7 10.300h3.200M313.3 8.300v2" stroke="#6e6e6e" stroke-width=".8"/><path d="M341.2 10.300h3.200M342.8 8.300v2" stroke="#6e6e6e" stroke-width=".8"/><path d="M370.7 10.300h3.200M372.3 8.300v2" stroke="#6e6e6e" stroke-width=".8"/><path d="M400.3 10.300h3.200M401.9 8.300v2" stroke="#6e6e6e" stroke-width=".8"/><path d="M429.8 10.300h3.200M431.4 8.300v2" stroke="#6e6e6e" stroke-width=".8"/><path d="M459.3 10.300h3.200M460.9 8.300v2" stroke="#6e6e6e" stroke-width=".8"/><path d="M44.9 .600h5.200l-2.600 3.900z" fill="#fff" stroke="#555" stroke-width=".7"/><path d="M44.9 9.500l2.600-3.900 2.600 3.900v1.300h-5.200z" fill="#fff" stroke="#555" stroke-width=".7"/><path d="M460.7 10.600l2.800-4.200 2.800 4.200z" fill="#fff" stroke="#555" stroke-width=".7"/></svg>
<div class="a" style="left:2.500px;top:27px;width:9.500px;height:473px;background:#fff"></div>
<div class="a" style="left:2.500px;top:27px;width:9.500px;height:47.500px;background:#f1ecda;border:1px solid #cfcab6;border-bottom:none"></div>
<svg style="left:2.500px;top:27px" width="9.500" height="473" viewBox="0 0 9.500 473"><rect y="2.10" x="3.55" height=".8" width="2.4" fill="#b3a888"/><rect y="10.10" x="3.55" height=".8" width="2.4" fill="#b3a888"/><rect y="17.10" x="2.35" height=".8" width="4.8" fill="#b3a888"/><rect y="25.10" x="3.55" height=".8" width="2.4" fill="#b3a888"/><rect y="32.10" x="3.55" height=".8" width="2.4" fill="#b3a888"/><rect y="40.10" x="3.55" height=".8" width="2.4" fill="#b3a888"/><rect y="55.10" x="3.55" height=".8" width="2.4" fill="#8c8c8c"/><rect y="62.10" x="3.55" height=".8" width="2.4" fill="#8c8c8c"/><rect y="70.10" x="3.55" height=".8" width="2.4" fill="#8c8c8c"/><rect y="77.10" x="2.35" height=".8" width="4.8" fill="#8c8c8c"/><rect y="85.10" x="3.55" height=".8" width="2.4" fill="#8c8c8c"/><rect y="92.10" x="3.55" height=".8" width="2.4" fill="#8c8c8c"/><rect y="100.10" x="3.55" height=".8" width="2.4" fill="#8c8c8c"/><rect y="115.10" x="3.55" height=".8" width="2.4" fill="#8c8c8c"/><rect y="122.10" x="3.55" height=".8" width="2.4" fill="#8c8c8c"/><rect y="130.10" x="3.55" height=".8" width="2.4" fill="#8c8c8c"/><rect y="137.10" x="2.35" height=".8" width="4.8" fill="#8c8c8c"/><rect y="145.10" x="3.55" height=".8" width="2.4" fill="#8c8c8c"/><rect y="152.10" x="3.55" height=".8" width="2.4" fill="#8c8c8c"/><rect y="160.10" x="3.55" height=".8" width="2.4" fill="#8c8c8c"/><rect y="175.10" x="3.55" height=".8" width="2.4" fill="#8c8c8c"/><rect y="182.10" x="3.55" height=".8" width="2.4" fill="#8c8c8c"/><rect y="190.10" x="3.55" height=".8" width="2.4" fill="#8c8c8c"/><rect y="197.10" x="2.35" height=".8" width="4.8" fill="#8c8c8c"/><rect y="205.10" x="3.55" height=".8" width="2.4" fill="#8c8c8c"/><rect y="212.10" x="3.55" height=".8" width="2.4" fill="#8c8c8c"/><rect y="220.10" x="3.55" height=".8" width="2.4" fill="#8c8c8c"/><rect y="235.10" x="3.55" height=".8" width="2.4" fill="#8c8c8c"/><rect y="242.10" x="3.55" height=".8" width="2.4" fill="#8c8c8c"/><rect y="250.10" x="3.55" height=".8" width="2.4" fill="#8c8c8c"/><rect y="257.10" x="2.35" height=".8" width="4.8" fill="#8c8c8c"/><rect y="265.10" x="3.55" height=".8" width="2.4" fill="#8c8c8c"/><rect y="272.10" x="3.55" height=".8" width="2.4" fill="#8c8c8c"/><rect y="280.10" x="3.55" height=".8" width="2.4" fill="#8c8c8c"/><rect y="295.10" x="3.55" height=".8" width="2.4" fill="#8c8c8c"/><rect y="302.10" x="3.55" height=".8" width="2.4" fill="#8c8c8c"/><rect y="310.10" x="3.55" height=".8" width="2.4" fill="#8c8c8c"/><rect y="317.10" x="2.35" height=".8" width="4.8" fill="#8c8c8c"/><rect y="325.10" x="3.55" height=".8" width="2.4" fill="#8c8c8c"/><rect y="332.10" x="3.55" height=".8" width="2.4" fill="#8c8c8c"/><rect y="340.10" x="3.55" height=".8" width="2.4" fill="#8c8c8c"/><rect y="355.10" x="3.55" height=".8" width="2.4" fill="#8c8c8c"/><rect y="362.10" x="3.55" height=".8" width="2.4" fill="#8c8c8c"/><rect y="370.10" x="3.55" height=".8" width="2.4" fill="#8c8c8c"/><rect y="377.10" x="2.35" height=".8" width="4.8" fill="#8c8c8c"/><rect y="385.10" x="3.55" height=".8" width="2.4" fill="#8c8c8c"/><rect y="392.10" x="3.55" height=".8" width="2.4" fill="#8c8c8c"/><rect y="400.10" x="3.55" height=".8" width="2.4" fill="#8c8c8c"/><rect y="415.10" x="3.55" height=".8" width="2.4" fill="#8c8c8c"/><rect y="422.10" x="3.55" height=".8" width="2.4" fill="#8c8c8c"/><rect y="430.10" x="3.55" height=".8" width="2.4" fill="#8c8c8c"/><rect y="437.10" x="2.35" height=".8" width="4.8" fill="#8c8c8c"/><rect y="445.10" x="3.55" height=".8" width="2.4" fill="#8c8c8c"/><rect y="452.10" x="3.55" height=".8" width="2.4" fill="#8c8c8c"/><rect y="460.10" x="3.55" height=".8" width="2.4" fill="#8c8c8c"/><text transform="translate(6.800 107.6) rotate(-90)" text-anchor="middle" font-size="5.800" fill="#555" font-family="Liberation Sans,sans-serif">1</text><text transform="translate(6.800 167.7) rotate(-90)" text-anchor="middle" font-size="5.800" fill="#555" font-family="Liberation Sans,sans-serif">2</text><text transform="translate(6.800 227.8) rotate(-90)" text-anchor="middle" font-size="5.800" fill="#555" font-family="Liberation Sans,sans-serif">3</text><text transform="translate(6.800 287.9) rotate(-90)" text-anchor="middle" font-size="5.800" fill="#555" font-family="Liberation Sans,sans-serif">4</text><text transform="translate(6.800 348.0) rotate(-90)" text-anchor="middle" font-size="5.800" fill="#555" font-family="Liberation Sans,sans-serif">5</text><text transform="translate(6.800 408.1) rotate(-90)" text-anchor="middle" font-size="5.800" fill="#555" font-family="Liberation Sans,sans-serif">6</text><text transform="translate(6.800 468.2) rotate(-90)" text-anchor="middle" font-size="5.800" fill="#555" font-family="Liberation Sans,sans-serif">7</text></svg>
<div class="a" style="left:132px;top:26.400px;width:510px;height:480px;background:#fff;box-shadow:0 0 0 .8px #b7b7b7, 0 0 2px rgba(0,0,0,.18)"></div>
<svg style="left:170px;top:64px" width="440" height="12" viewBox="0 0 440 12"><path d="M3.500 10.500h6v-6" fill="none" stroke="#bdbdbd" stroke-width=".8"/><path d="M431.500 10.500h-6v-6" fill="none" stroke="#bdbdbd" stroke-width=".8"/></svg>
<svg style="left:0;top:0" width="800" height="500" viewBox="0 0 800 500"><defs><linearGradient id="cv" x1="0" y1="0" x2="0" y2="1"><stop offset="0" stop-color="#4a556c"/><stop offset=".35" stop-color="#6f86ad"/><stop offset="1" stop-color="#9bb4dc"/></linearGradient></defs>
<rect x="204.500" y="135.500" width="130" height="130" fill="#fff" stroke="none"/>
<path d="M204.500 135.500h130" fill="none" stroke="#b6c3c6" stroke-width="1"/>
<path d="M334.500 135.500v130" fill="none" stroke="#b0bdd0" stroke-width="1"/>
<path d="M204.500 135.500v130h130" fill="none" stroke="#5e636b" stroke-width="1"/>
<path d="M334.500 183.500h80.500" fill="none" stroke="#3d424d" stroke-width="1"/>
<rect x="414" y="183.500" width="1" height="90" fill="url(#cv)"/>
<rect x="364.500" y="273.500" width="142" height="142" fill="#fff" stroke="#54575d" stroke-width="1"/></svg>
<div class="a" style="left:760px;top:0;width:10.500px;height:500px;background:linear-gradient(to right,#f3f3ee,#fdfdfb)"></div>
<div class="a" style="left:760px;top:10px;width:10.500px;height:338px;background:linear-gradient(to right,#c9d7fc,#b9cbf9);border-radius:1.500px;box-shadow:inset 0 0 0 .6px #e6edff"></div>
<div class="a" style="left:760px;top:0;width:10.500px;height:10px;background:linear-gradient(to bottom,#dbe5fe,#bccdf9);border-radius:1.500px;box-shadow:inset 0 0 0 .6px #eef3ff"></div>
<svg style="left:762.300px;top:3px" width="6" height="4" viewBox="0 0 6 4"><path d="M.5 3.500l2.500-2.600 2.500 2.600" fill="none" stroke="#3a4f94" stroke-width="1.400"/></svg>
<div class="a" style="left:760px;top:490px;width:10.500px;height:9.500px;background:linear-gradient(to bottom,#dbe5fe,#bccdf9);border-radius:1.500px;box-shadow:inset 0 0 0 .6px #eef3ff"></div>
<svg style="left:762.300px;top:493px" width="6" height="4" viewBox="0 0 6 4"><path d="M.5 .5l2.500 2.600 2.500-2.600" fill="none" stroke="#3a4f94" stroke-width="1.400"/></svg>
<div class="a" style="left:770.500px;top:0;width:4px;height:500px;background:#f7f6f1"></div>
<div class="a" style="left:774.500px;top:0;width:1px;height:500px;background:#bdb9a6"></div>
<div class="a" style="left:770.500px;top:226.500px;width:4px;height:46.500px;background:#6c7064"></div>
<svg style="left:771.500px;top:247px" width="3" height="4" viewBox="0 0 3 4"><path d="M.3 .3l2.400 1.700-2.400 1.700z" fill="#fff"/></svg>
<div class="a" style="left:775.500px;top:0;width:24.500px;height:500px;background:#ece9d8"></div>
<svg style="left:785px;top:10.500px" width="6" height="5" viewBox="0 0 6 5"><rect x="0" y="0" width="3.800" height="2.400" fill="#333"/><rect x="2.400" y="3.200" width="3.200" height="1.300" fill="#111"/></svg>
<div class="a" style="left:778px;top:27.500px;width:19.500px;height:19px;border:1px solid #dedac9;border-radius:2px;background:#efecde"></div>
<svg style="left:780.500px;top:30px" width="14.500" height="14.500" viewBox="0 0 14.500 14.500"><g transform="rotate(45 7.250 7.250)"><path d="M-1.200 5.400h3.200l1.300 .9h7.900l1.300-.9h3.200v1.100h-2.600v1.500h2.600v1.100h-3.200l-1.300-.9h-7.900l-1.300.9h-3.200v-1.100h2.600v-1.500h-2.600z" fill="#f4f4f2" stroke="#9c9c98" stroke-width=".7"/></g></svg>
<svg style="left:779.300px;top:52px" width="15.500" height="14.500" viewBox="0 0 15.500 14.500"><path d="M.4 14v-9l13 9z" fill="#4caf3c" stroke="#2f8a24" stroke-width=".5"/><path d="M4 .6h11v3.200h-3.700v8.200h1.600v1.200h-6.800v-1.200h1.600v-8.200h-3.700z" fill="#3c3c3c"/></svg>
<svg style="left:779.700px;top:74.500px" width="14.500" height="12.200" viewBox="0 0 14.500 12.500"><path d="M5 2.500c0-2.600 4.500-2.600 4.500 0" fill="none" stroke="#8a6a2a" stroke-width=".9"/><rect x=".5" y="2.500" width="13.500" height="9.500" fill="#c98a1c" stroke="#8a5a10" stroke-width=".9"/><rect x="2.300" y="4.300" width="10" height="6" fill="#e8c060"/><path d="M7.300 10.300v-3M7.300 7.300l-2-2.200M7.300 7.300l2-2.200" stroke="#4a3208" stroke-width=".9"/></svg>
<svg style="left:780.700px;top:96.500px" width="13.600" height="13.600" viewBox="0 0 14.500 14.500"><circle cx="7.250" cy="7.250" r="6.200" fill="#f6f6f4" stroke="#a9b5ad" stroke-width="1.500"/><path d="M4.300 3.800l4.400 3.200-1.600 1.600z" fill="#d22"/><path d="M10.300 10.800l-4.400-3.200 1.600-1.600z" fill="#98a4b0"/></svg>
</div>
<div class="a" id="draw"></div>
<svg style="left:2.5px;top:585px" width="2" height="17" viewBox="0 0 2 17"><rect x="0" y="0" width="1.2" height="1.2" fill="#c4c4c4"/><rect x="0" y="2.5" width="1.2" height="1.2" fill="#c4c4c4"/><rect x="0" y="5.0" width="1.2" height="1.2" fill="#c4c4c4"/><rect x="0" y="7.5" width="1.2" height="1.2" fill="#c4c4c4"/><rect x="0" y="10.0" width="1.2" height="1.2" fill="#c4c4c4"/><rect x="0" y="12.5" width="1.2" height="1.2" fill="#c4c4c4"/><rect x="0" y="15.0" width="1.2" height="1.2" fill="#c4c4c4"/></svg>
<svg style="left:13.5px;top:586px" width="9" height="13" viewBox="0 0 9 13"><path d="M.6 .6v10l2.400-2.200 1.700 4 1.500-.6-1.700-3.900 3.300-.1z" fill="#f4f4f4" stroke="#a8a8a8" stroke-width=".8"/></svg>
<div class="sep" style="left:30px;top:584px;height:18px"></div>
<svg style="left:37.5px;top:586.5px" width="11.5" height="11.5" viewBox="0 0 11.5 11.5"><path d="M.5 11L11.200 .3" stroke="#111" stroke-width="1.100"/></svg>
<svg style="left:57.5px;top:585.5px" width="13" height="13" viewBox="0 0 13 13"><path d="M10.200 .6l2.200 2.200-7.800 7.300-3.200 1.200 1-3.200z" fill="#f5a55e" stroke="#c9682a" stroke-width=".7"/><path d="M1.400 11.300l1.700-.6-1.100-1.100z" fill="#333"/><path d="M2.500 12.300l6.500-1.200" stroke="#d8a070" stroke-width=".9"/></svg>
<svg style="left:76.5px;top:587px" width="16" height="12" viewBox="0 0 16 12"><path d="M2.500 11.500c0-8 1.500-10 5.500-10s5.500 2 5.500 10" fill="none" stroke="#222" stroke-width="1"/><path d="M1 1.500h14" stroke="#555" stroke-width=".6"/><rect x="0" y=".5" width="2" height="2" fill="#111"/><rect x="14" y=".5" width="2" height="2" fill="#111"/><rect x="7" y=".5" width="2" height="2" fill="#111"/><rect x="1.500" y="10" width="2" height="2" fill="#111"/><rect x="12.500" y="10" width="2" height="2" fill="#111"/></svg>
<svg style="left:98.5px;top:586.5px" width="14" height="12" viewBox="0 0 14 12"><path d="M2 1l5 1.500 .5 5 5.500-3.500v7.500h-12z" fill="none" stroke="#333" stroke-width=".8"/><rect x="1" y="0" width="2" height="2" fill="#111"/><rect x="6" y=".5" width="2" height="2" fill="#111"/><rect x="12" y="3" width="2" height="2" fill="#111"/><rect x="12" y="10.500" width="2" height="2" fill="#111"/><rect x="0" y="10.500" width="2" height="2" fill="#111"/></svg>
<div class="sep" style="left:117.5px;top:584px;height:18px"></div>
<svg width="0" height="0" style="left:0;top:0"><defs><linearGradient id="bg" x1="0" y1="0" x2="0" y2="1"><stop offset="0" stop-color="#8fb4dc"/><stop offset="1" stop-color="#5f8fc8"/></linearGradient></defs></svg>
<svg style="left:123.5px;top:588px" width="15" height="9" viewBox="0 0 15 9"><rect x=".5" y=".5" width="13.600" height="8.200" fill="url(#bg)" stroke="#3465a4" stroke-width=".9"/></svg>
<svg style="left:144px;top:588px" width="15" height="9" viewBox="0 0 15 9"><rect x=".5" y=".5" width="13.600" height="8.200" rx="2" fill="url(#bg)" stroke="#3465a4" stroke-width=".9"/></svg>
<svg style="left:165px;top:585px" width="14" height="14" viewBox="0 0 14 14"><rect x=".5" y=".5" width="13" height="13" fill="url(#bg)" stroke="#3465a4" stroke-width=".9"/></svg>
<svg style="left:185.5px;top:587.5px" width="15" height="10" viewBox="0 0 15 10"><ellipse cx="7.300" cy="5" rx="6.800" ry="4.800" fill="url(#bg)" stroke="#3465a4" stroke-width=".9"/></svg>
<svg style="left:206px;top:585.3px" width="14" height="14" viewBox="0 0 14 14"><circle cx="7" cy="7" r="6.600" fill="url(#bg)" stroke="#3465a4" stroke-width=".9"/></svg>
<svg style="left:226.5px;top:586px" width="15" height="13" viewBox="0 0 15 13"><path d="M7.300 .8l6.700 11.700h-13.400z" fill="url(#bg)" stroke="#3465a4" stroke-width=".9"/></svg>
<svg style="left:248px;top:586.5px" width="13" height="12.5" viewBox="0 0 13 12.5"><path d="M.6 .8l11.400 11.200h-11.400z" fill="url(#bg)" stroke="#3465a4" stroke-width=".9"/></svg>
<div class="sep" style="left:266.5px;top:584px;height:18px"></div>
<svg style="left:272.5px;top:585.5px" width="14" height="14" viewBox="0 0 14 14"><path d="M7 .7l6.300 6.300-6.300 6.300-6.300-6.300z" fill="url(#bg)" stroke="#3465a4" stroke-width=".9"/></svg>
<svg style="left:291.2px;top:591.6px" width="3.6" height="2.1" viewBox="0 0 3.6 2.1"><path d="M0 0h3.600l-1.800 2.100z" fill="#111"/></svg>
<svg style="left:300px;top:585.5px" width="15" height="14.5" viewBox="0 0 15 14.5"><circle cx="7.500" cy="7.250" r="6.700" fill="url(#bg)" stroke="#3465a4" stroke-width=".9"/><circle cx="5.200" cy="5.500" r=".9" fill="#2a4f86"/><circle cx="9.800" cy="5.500" r=".9" fill="#2a4f86"/><path d="M4 8.800c1.800 2.500 5.200 2.500 7 0" fill="none" stroke="#2a4f86" stroke-width=".9"/></svg>
<svg style="left:320.0px;top:591.6px" width="3.6" height="2.1" viewBox="0 0 3.6 2.1"><path d="M0 0h3.600l-1.800 2.100z" fill="#111"/></svg>
<svg style="left:328.5px;top:588px" width="14.5" height="9.5" viewBox="0 0 14.5 9.5"><path d="M.6 4.750l4.600-4.200v2.500h4.100v-2.500l4.600 4.200-4.600 4.200v-2.500h-4.100v2.500z" fill="url(#bg)" stroke="#3465a4" stroke-width=".9"/></svg>
<svg style="left:347.9px;top:591.6px" width="3.6" height="2.1" viewBox="0 0 3.6 2.1"><path d="M0 0h3.600l-1.800 2.100z" fill="#111"/></svg>
<svg style="left:356.8px;top:586px" width="14" height="13.2" viewBox="0 0 14 13.2"><path d="M7 .6l1.900 4.400 4.700 .4-3.600 3.100 1.100 4.600-4.100-2.500-4.100 2.500 1.100-4.600-3.600-3.100 4.700-.4z" fill="url(#bg)" stroke="#3465a4" stroke-width=".9"/></svg>
<svg style="left:375.7px;top:591.6px" width="3.6" height="2.1" viewBox="0 0 3.6 2.1"><path d="M0 0h3.600l-1.800 2.100z" fill="#111"/></svg>
<svg style="left:385px;top:586px" width="15" height="13" viewBox="0 0 15 13"><path d="M2 .5h11c.8 0 1.500.7 1.500 1.500v6c0 .8-.7 1.500-1.500 1.500h-6.500l-3.500 3v-3h-1c-.8 0-1.500-.7-1.500-1.500v-6c0-.8.700-1.500 1.500-1.500z" fill="url(#bg)" stroke="#3465a4" stroke-width=".9"/></svg>
<svg style="left:404.5px;top:591.6px" width="3.6" height="2.1" viewBox="0 0 3.6 2.1"><path d="M0 0h3.600l-1.800 2.100z" fill="#111"/></svg>
<svg style="left:412.5px;top:586px" width="14" height="13.5" viewBox="0 0 14 13.5"><rect x=".5" y=".5" width="13" height="12.500" fill="url(#bg)" stroke="#3465a4" stroke-width=".9"/><path d="M.5 4.500h13M5 .5v12.500" stroke="#2f5f9f" stroke-width=".9"/></svg>
<svg style="left:431.7px;top:591.6px" width="3.6" height="2.1" viewBox="0 0 3.6 2.1"><path d="M0 0h3.600l-1.800 2.100z" fill="#111"/></svg>
<svg style="left:446.5px;top:587px" width="15" height="12" viewBox="0 0 15 12"><ellipse cx="7.500" cy="5" rx="6.800" ry="4.500" fill="#fff" stroke="#333" stroke-width=".9"/><path d="M3.500 8.500l-2 3 4.500-2" fill="#fff" stroke="#333" stroke-width=".8"/><path d="M4.500 5h6" stroke="#999" stroke-width=".8"/></svg>
<div class="sep" style="left:466.5px;top:584px;height:18px"></div>
<svg style="left:472.5px;top:585.5px" width="14" height="14" viewBox="0 0 14 14"><rect x=".7" y=".7" width="12.600" height="12.600" fill="#fff" stroke="#222" stroke-width="1.100" stroke-dasharray="1.300 1.300"/><text x="7" y="11.300" text-anchor="middle" font-family="Liberation Serif,serif" font-weight="bold" font-size="12" fill="#222">T</text></svg>
<svg style="left:493.5px;top:586px" width="14.5" height="12.5" viewBox="0 0 14.5 12.5"><path d="M5 2.500c0-2.600 4.500-2.600 4.500 0" fill="none" stroke="#8a6a2a" stroke-width=".9"/><rect x=".5" y="2.500" width="13.500" height="9.500" fill="#c98a1c" stroke="#8a5a10" stroke-width=".9"/><rect x="2.300" y="4.300" width="10" height="6" fill="#f4ead0"/><text x="7.250" y="9.800" text-anchor="middle" font-size="5.500" font-weight="bold" fill="#3465a4" font-family="Liberation Sans,sans-serif">A</text></svg>
<div class="sep" style="left:512.5px;top:584px;height:18px"></div>
<svg style="left:518.5px;top:586px" width="13" height="13" viewBox="0 0 13 13"><path d="M2 1.500l8 1-4.500 4.500 5.500 4.500-9 .5" fill="none" stroke="#cfcfcf" stroke-width=".9"/><rect x="1" y=".5" width="2" height="2" fill="#c8c8c8"/><rect x="9.500" y="1.500" width="2" height="2" fill="#c8c8c8"/><rect x="10" y="10.500" width="2" height="2" fill="#c8c8c8"/></svg>
<svg style="left:541.5px;top:587.5px" width="11.5" height="10.5" viewBox="0 0 11.5 10.5"><path d="M.5 3h8v7h-8z" fill="#dcdcdc" stroke="#cfcfcf" stroke-width=".7"/><path d="M.5 3l2.500-2.500h8l-2.500 2.500zM8.500 3l2.500-2.500v7l-2.500 2.500z" fill="#e6e6e6" stroke="#cfcfcf" stroke-width=".7"/></svg>
<div class="a" id="status"></div>
<div class="t sb" style="left:6px;">Page 1 of 1</div>
<div class="t sb" style="left:111px;">0 words, 0 characters</div>
<div class="t sb" style="left:247px;">Default Style</div>
<div class="t sb" style="left:386px;">English (USA)</div>
<div class="ssep" style="left:105px"></div>
<div class="ssep" style="left:242.5px"></div>
<div class="ssep" style="left:350px"></div>
<div class="ssep" style="left:460.5px"></div>
<div class="ssep" style="left:503px"></div>
<div class="ssep" style="left:521.5px"></div>
<div class="ssep" style="left:539px"></div>
<div class="ssep" style="left:557.5px"></div>
<div class="ssep" style="left:681px"></div>
<div class="ssep" style="left:771px"></div>
<svg style="left:509px;top:609px" width="8" height="7" viewBox="0 0 8 7"><rect x="1" y="1.500" width="5" height="4" fill="#aaa"/><path d="M0 .5v6M7.500 .5v6" stroke="#888" stroke-width=".6"/></svg>
<svg style="left:527px;top:608.5px" width="7" height="8" viewBox="0 0 7 8"><path d="M.5 .5h4.500l1.500 1.500v5.500h-6z" fill="#fff" stroke="#a66" stroke-width=".7"/><path d="M3 3l2 0-1 2z" fill="#c22"/></svg>
<svg style="left:642.5px;top:608.5px" width="33" height="8" viewBox="0 0 33 8"><path d="M.5 .5h3.200l1.300 1.300v5.700h-4.500z" fill="#fff" stroke="#777" stroke-width=".7"/><path d="M9.500 .5h3.200l1.300 1.300v5.700h-4.500zM15 .5h3.200l1.300 1.300v5.700h-4.500z" fill="#fff" stroke="#777" stroke-width=".7"/><path d="M23.500 1.500c2-1.200 3.500-1.200 4.500 0v6c-1-1.200-2.500-1.200-4.500 0zM28 1.500c1-1.200 2.500-1.200 4.500 0v6c-2-1.200-3.500-1.200-4.500 0z" fill="#fff" stroke="#777" stroke-width=".7"/></svg>
<svg style="left:689px;top:609px" width="80" height="8" viewBox="0 0 80 8"><path d="M0 3.800h4" stroke="#555" stroke-width=".9"/><path d="M8.500 3.800h60" stroke="#8a8a8a" stroke-width=".7"/><path d="M26.500 1v5.600" stroke="#666" stroke-width=".8"/><circle cx="38" cy="3.800" r="2.300" fill="#fff" stroke="#555" stroke-width=".8"/><path d="M73 3.800h4.400M75.200 1.600v4.400" stroke="#555" stroke-width=".9"/></svg>
<div class="t sb" style="left:776px;">100%</div>
<div class="a" id="task"></div>
<div class="a" style="left:0;top:620.800px;width:59px;height:19.200px;border-radius:0 7px 7px 0;background:linear-gradient(to bottom,#3a8a3a 0%,#62b45e 9%,#439843 22%,#3a8c3a 60%,#347e34 85%,#2b6a2b 100%);box-shadow:1px 0 2px rgba(0,0,0,.45), inset 0 1px 1px rgba(255,255,255,.35)"></div>
<svg style="left:7px;top:623.8px" width="12.6" height="12.6" viewBox="0 0 11 11"><path d="M.8 2.300c1.500-1 3-.9 4.500-.1l-.9 3.500c-1.500-.8-3-.8-4.500.1z" fill="#e5532d"/><path d="M6 2.500c1.500.8 3 .9 4.500 0l-.9 3.500c-1.500.9-3 .8-4.500 0z" fill="#7fbf3f"/><path d="M-.4 6.600c1.500-1 3-.9 4.500-.1l-.9 3.500c-1.500-.8-3-.8-4.500.1z" fill="#4a8fe0"/><path d="M4.800 6.800c1.500.8 3 .9 4.500 0l-.9 3.500c-1.500.9-3 .8-4.500 0z" fill="#f5c02d"/></svg>
<div class="t " style="left:22px;top:624.600px;font-size:11.300px;font-style:italic;font-weight:bold;color:#fff;text-shadow:1px 1px 1px #1d4f1d;letter-spacing:-.2px">start</div>
<svg style="left:75px;top:625.5px" width="7.5" height="10" viewBox="0 0 7.5 10"><rect x=".5" y="1" width="6.500" height="8" rx="1.500" fill="#e8eefa"/><rect x="2" y="2.500" width="3.500" height="3" fill="#6a8fcf"/><path d="M1 7.500h5.500" stroke="#8aa" stroke-width=".8"/></svg>
<svg style="left:88.5px;top:625.5px" width="10.5" height="10" viewBox="0 0 10.5 10"><circle cx="5.200" cy="5.200" r="3.600" fill="none" stroke="#3aa0f0" stroke-width="1.700"/><path d="M2.300 5.400h5.600" stroke="#3aa0f0" stroke-width="1.200"/><path d="M.5 8.500c2-5 6-8 9.500-7.500-3 .5-6 3-8 8z" fill="#f5d84a"/></svg>
<svg style="left:103px;top:625.5px" width="9.5" height="10" viewBox="0 0 9.5 10"><rect x=".5" y="3" width="6.500" height="5.500" fill="#e8f0fc" stroke="#8ab0e0" stroke-width=".6"/><rect x="4.500" y="1" width="4.500" height="5" fill="#cfe0f8" stroke="#6a9ad8" stroke-width=".6"/><path d="M.5 3l3.200 2.500 3.300-2.500" fill="none" stroke="#8ab0e0" stroke-width=".6"/></svg>
<svg style="left:118px;top:625.5px" width="9.5" height="10" viewBox="0 0 9.5 10"><circle cx="4.750" cy="5" r="4.500" fill="#e8601c"/><circle cx="4.400" cy="4.600" r="2.400" fill="#3a55b8"/><path d="M1 3.500c1-2.500 5-3.500 7.500-.5-2-1-4-.5-4.500 1.500z" fill="#f5a02d"/></svg>
<svg style="left:132.5px;top:625.5px" width="8.0" height="10" viewBox="0 0 8.0 10"><circle cx="4" cy="5" r="3.800" fill="#f0f4fc"/><circle cx="4" cy="5" r="2" fill="#5a7fd0"/><circle cx="4" cy="5" r=".9" fill="#fff"/></svg>
<svg style="left:146px;top:625.5px" width="10" height="10" viewBox="0 0 10 10"><path d="M.5 8.500l8.500-7.500-2.500 5.500 3 .5-7 2.500 1.500-2z" fill="#dfe8ff"/><path d="M2 8l5-5" stroke="#4a70e0" stroke-width="1.200"/></svg>
<svg style="left:160.5px;top:625.5px" width="9.5" height="10" viewBox="0 0 9.5 10"><ellipse cx="4.750" cy="5" rx="4.500" ry="3" fill="#f0b8d0"/><ellipse cx="4.750" cy="5" rx="2.600" ry="1.300" fill="#fbe4ee"/></svg>
<svg style="left:174.5px;top:625.5px" width="11.0" height="10" viewBox="0 0 11.0 10"><rect x=".3" y="2" width="10.400" height="6" fill="#fff"/><rect x="1.800" y="4" width="1.800" height="2" fill="#222"/><rect x="4.600" y="4" width="1.800" height="2" fill="#222"/><rect x="7.400" y="4" width="1.800" height="2" fill="#222"/></svg>
<svg style="left:190.5px;top:625.5px" width="9.0" height="10" viewBox="0 0 9.0 10"><circle cx="4.500" cy="5" r="4.300" fill="#e04a32"/><path d="M4.500 5L.8 2.900A4.300 4.300 0 0 0 4.500 9.300z" fill="#3aa854"/><path d="M4.500 5v4.300A4.300 4.300 0 0 0 8.600 3.600z" fill="#f5c82d"/><circle cx="4.500" cy="5" r="1.800" fill="#4a8af0" stroke="#fff" stroke-width=".5"/></svg>
<svg style="left:203.5px;top:625.5px" width="9.5" height="10" viewBox="0 0 9.5 10"><rect x=".3" y="1" width="9" height="8" fill="#fff"/><rect x=".3" y="1" width="9" height="2.200" fill="#1a1a2a"/></svg>
<svg style="left:218px;top:625.5px" width="10" height="10" viewBox="0 0 10 10"><rect x=".3" y=".8" width="9.400" height="8.600" fill="#5ac8e8"/><path d="M.3 9.400v-4l3.500-2.500 6 6.500z" fill="#6ac04a"/><circle cx="7" cy="3.300" r="1.500" fill="#f5e04a"/></svg>
<svg style="left:233px;top:625.5px" width="7.5" height="10" viewBox="0 0 7.5 10"><rect x=".5" y=".5" width="6.500" height="5" fill="#4a5a6a" stroke="#9ab" stroke-width=".5"/><path d="M1.500 6.500h4.500l-2.250 3z" fill="#d8e0e8"/></svg>
<svg style="left:67px;top:622px" width="2" height="16" viewBox="0 0 2 16"><rect x="0" y="0.0" width="1.200" height="1.200" fill="#163f9c"/><rect x="0" y="2.5" width="1.200" height="1.200" fill="#163f9c"/><rect x="0" y="5.0" width="1.200" height="1.200" fill="#163f9c"/><rect x="0" y="7.5" width="1.200" height="1.200" fill="#163f9c"/><rect x="0" y="10.0" width="1.200" height="1.200" fill="#163f9c"/><rect x="0" y="12.5" width="1.200" height="1.200" fill="#163f9c"/><rect x="0" y="15.0" width="1.200" height="1.200" fill="#163f9c"/></svg>
<svg style="left:252px;top:622px" width="2" height="16" viewBox="0 0 2 16"><rect x="0" y="0.0" width="1.200" height="1.200" fill="#163f9c"/><rect x="0" y="2.5" width="1.200" height="1.200" fill="#163f9c"/><rect x="0" y="5.0" width="1.200" height="1.200" fill="#163f9c"/><rect x="0" y="7.5" width="1.200" height="1.200" fill="#163f9c"/><rect x="0" y="10.0" width="1.200" height="1.200" fill="#163f9c"/><rect x="0" y="12.5" width="1.200" height="1.200" fill="#163f9c"/><rect x="0" y="15.0" width="1.200" height="1.200" fill="#163f9c"/></svg>
<div class="tb" style="left:260px;width:94px"></div>
<div class="t tbt" style="left:277.3px;">Inbox - Outlook Exp...</div>
<div class="tb" style="left:356px;width:93.5px"></div>
<div class="t tbt" style="left:373.3px;">An Author Comment...</div>
<div class="tb" style="left:452px;width:93.5px"></div>
<div class="t tbt" style="left:469.3px;">LibreOffice Write, D...</div>
<div class="tb act" style="left:547.5px;width:96.5px"></div>
<div class="t tbt" style="left:564.8px;">Untitled 1 - LibreOffi...</div>
<svg style="left:265px;top:624.5px" width="9" height="9" viewBox="0 0 9 9"><rect x=".5" y="2" width="8" height="6" fill="#e8eef8" stroke="#5a6f9a" stroke-width=".6"/><path d="M.5 2l4 3.500 4-3.500" fill="none" stroke="#5a6f9a" stroke-width=".6"/><rect x="4" y="0" width="4.500" height="4" fill="#3a5fb0"/></svg>
<svg style="left:361px;top:624.5px" width="9" height="9" viewBox="0 0 9 9"><path d="M.5 4l4-3.500 4 3.500v4.500h-8z" fill="#f4f4f4" stroke="#7a7a9a" stroke-width=".6"/><path d="M.5 4l4 3 4-3" fill="none" stroke="#9a9ab8" stroke-width=".6"/></svg>
<svg style="left:457px;top:624.5px" width="9.5" height="9.5" viewBox="0 0 9.5 9.5"><circle cx="4.750" cy="4.750" r="4.400" fill="#e8701c"/><circle cx="4.300" cy="4.300" r="2.300" fill="#3a5fc0"/><path d="M1 3c1-2.500 5-3.500 7.500-.5-2-1-4-.5-4.500 1.500z" fill="#f5b02d"/></svg>
<svg style="left:552.5px;top:624px" width="8" height="10" viewBox="0 0 8 10"><path d="M.5 .5h4.800l2.200 2.200v6.800h-7z" fill="#fff" stroke="#cdd" stroke-width=".5"/><rect x="1.800" y="4" width="4" height="1" fill="#3a8f3a"/><rect x="1.800" y="6" width="4" height="1" fill="#3a8f3a"/></svg>
<div class="a" style="left:654px;top:619px;width:146px;height:21px;background:linear-gradient(to bottom,#0c59b9 0%,#19b9f3 8%,#1aa6ee 16%,#1295e6 35%,#1290e2 70%,#0f82d4 90%,#0a5fae 100%);box-shadow:inset 1px 0 0 #0d3f8f, inset 2px 0 0 #3fc0f5"></div>
<svg style="left:659px;top:626px" width="9" height="9.6" viewBox="0 0 9 9.600"><circle cx="4.500" cy="4.800" r="4.400" fill="#f8c03a"/><circle cx="4.500" cy="4.800" r="2.300" fill="#fdf0c0"/><path d="M3 6l3-2.500" stroke="#e08a1c" stroke-width="1"/></svg>
<svg style="left:670.4px;top:626px" width="9.600000000000023" height="9.6" viewBox="0 0 9.600000000000023 9.600"><rect x="0" y=".8" width="9.600" height="8" fill="#22dd22"/><rect x="1.500" y="4" width="6.500" height="2.300" fill="#0a2a0a"/></svg>
<svg style="left:681.6px;top:626px" width="8.0" height="9.6" viewBox="0 0 8.0 9.600"><path d="M.5 3.300h2.500l3.500-3v9l-3.500-3h-2.500z" fill="#d8601c" stroke="#2a1a0a" stroke-width=".7"/><path d="M7 2.500c1 1.500 1 3 0 4.500" stroke="#111" stroke-width=".7" fill="none"/></svg>
<svg style="left:691.6px;top:626px" width="9.399999999999977" height="9.6" viewBox="0 0 9.399999999999977 9.600"><rect x="3.200" y=".3" width="5.800" height="4.800" fill="#dfe6f5" stroke="#4a5a9a" stroke-width=".6"/><rect x=".3" y="3" width="5.800" height="4.800" fill="#5a6ac0" stroke="#3a4a8a" stroke-width=".6"/><path d="M1.500 9h4" stroke="#ccd" stroke-width=".8"/></svg>
<svg style="left:704.4px;top:626px" width="9.200000000000045" height="9.6" viewBox="0 0 9.200000000000045 9.600"><rect x="3.200" y=".3" width="5.800" height="4.800" fill="#dfe6f5" stroke="#4a5a9a" stroke-width=".6"/><rect x=".3" y="3" width="5.800" height="4.800" fill="#d04a9a" stroke="#3a4a8a" stroke-width=".6"/><path d="M1.500 9h4" stroke="#ccd" stroke-width=".8"/></svg>
<svg style="left:715px;top:626px" width="9" height="9.6" viewBox="0 0 9 9.600"><rect x="3.200" y=".3" width="5.800" height="4.800" fill="#dfe6f5" stroke="#4a5a9a" stroke-width=".6"/><rect x=".3" y="3" width="5.800" height="4.800" fill="#5a6ac0" stroke="#3a4a8a" stroke-width=".6"/><path d="M1.500 9h4" stroke="#ccd" stroke-width=".8"/></svg>
<svg style="left:727.6px;top:626px" width="8.799999999999955" height="9.6" viewBox="0 0 8.799999999999955 9.600"><path d="M.3 3l4-2.500 4.200 2-1.500 4.500-3 2-3-2.500z" fill="#16202a"/><path d="M2 3.500l2.500-1.200 2 1" stroke="#8ab" stroke-width=".6" fill="none"/></svg>
<svg style="left:738px;top:626px" width="7.600000000000023" height="9.6" viewBox="0 0 7.600000000000023 9.600"><circle cx="3.800" cy="4.800" r="3.600" fill="#9aa0a8"/><circle cx="3.300" cy="4" r="1.700" fill="#f0a84a"/><path d="M5 7l1.800 2" stroke="#ccd" stroke-width=".9"/></svg>
<svg style="left:749.6px;top:626px" width="7.399999999999977" height="9.6" viewBox="0 0 7.399999999999977 9.600"><path d="M.5 1.500l3.200-1.200 3.200 1.200v4c0 2-1.500 3.300-3.200 4-1.700-.7-3.200-2-3.200-4z" fill="#3a8a4a" stroke="#cfd8cf" stroke-width=".7"/><path d="M2 5l1.300 1.500 2.200-3" stroke="#fff" stroke-width=".8" fill="none"/></svg>
<div class="t " style="left:764px;top:628.100px;font-size:6.700px;color:#fff">11:42 PM</div>
</body></html>
